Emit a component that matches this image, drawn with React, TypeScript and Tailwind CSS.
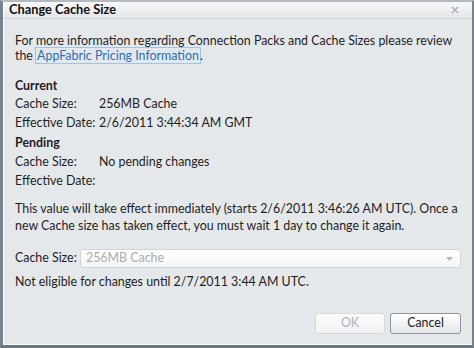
const rows = (items: [string, string][]) =>
  items.map(([k, v], i) => (
    <div className="flex h-[19px] items-center" key={i}>
      <span className="w-[84px] shrink-0 whitespace-nowrap">{k}</span>
      <span>{v}</span>
    </div>
  ))

const App = () => {
  return (
    <div
      className="w-[474px] h-[348px] overflow-hidden border-t-2 border-l-[3px] border-r-2 border-b-[3px] border-t-[#b4b9c0] border-l-[#76828f] border-r-[#7a838d] border-b-[#6c757e] text-[12.4px] text-[#1e1e1e]"
      style={{ fontFamily: "Lato, 'Open Sans', sans-serif" }}
    >
      <div className="flex flex-col h-full bg-[#e5e8eb] border-l border-b border-white">
        <div className="flex items-center justify-between h-[17px] px-[5px] bg-gradient-to-b from-[#f7f8f9] to-[#e3e6e9] border-b border-[#d3d7db]">
          <span className="font-bold text-[12.8px] text-[#111]">Change Cache Size</span>
          <svg width="8" height="8" viewBox="0 0 8 8" className="mr-[8px]">
            <path d="M1 1L7 7M7 1L1 7" stroke="#a9aeb4" strokeWidth="1.2" />
          </svg>
        </div>
        <div className="px-[11px] pt-[14px]">
          <p className="leading-[15px]">
            For more information regarding Connection Packs and Cache Sizes please review
            <br />
            the{" "}
            <a className="text-[#2e6db5] border border-[#9ec3e6] px-[1px] -mx-[1px]">
              AppFabric Pricing Information
            </a>
            .
          </p>
          <div className="mt-[14px] font-bold h-[18px] flex items-center">Current</div>
          {rows([
            ["Cache Size:", "256MB Cache"],
            ["Effective Date:", "2/6/2011 3:44:34 AM GMT"],
          ])}
          <div className="font-bold h-[20px] flex items-center">Pending</div>
          {rows([
            ["Cache Size:", "No pending changes"],
            ["Effective Date:", ""],
          ])}
          <p className="mt-[9px] leading-[17px]">
            This value will take effect immediately (starts 2/6/2011 3:46:26 AM UTC). Once a
            <br />
            new Cache size has taken effect, you must wait 1 day to change it again.
          </p>
          <div className="flex items-center mt-[15px]">
            <span className="w-[65px]">Cache Size:</span>
            <div className="flex-1 h-[19px] flex items-center justify-between px-[5px] bg-gradient-to-b from-white to-[#f3f4f5] border border-[#d0d4d8] rounded-[3px] text-[#a8adb3]">
              <span>256MB Cache</span>
              <svg width="7" height="4" viewBox="0 0 7 4" className="mr-[2px]">
                <path d="M0 0H7L3.5 4Z" fill="#b5b9be" />
              </svg>
            </div>
          </div>
          <p className="mt-[5px] leading-[17px]">Not eligible for changes until 2/7/2011 3:44 AM UTC.</p>
        </div>
        <div className="mt-auto flex justify-end gap-[5px] px-[11px] pb-[10px]">
          <button className="w-[70px] h-[21px] rounded-[3px] border border-[#d6dadd] bg-gradient-to-b from-[#fbfbfc] to-[#eff1f2] text-[#b0b4b9]">
            OK
          </button>
          <button className="w-[71px] h-[21px] rounded-[3px] border border-[#8e959c] bg-gradient-to-b from-white to-[#e4e6e8] text-[#1e1e1e]">
            Cancel
          </button>
        </div>
      </div>
    </div>
  )
}

export default App
